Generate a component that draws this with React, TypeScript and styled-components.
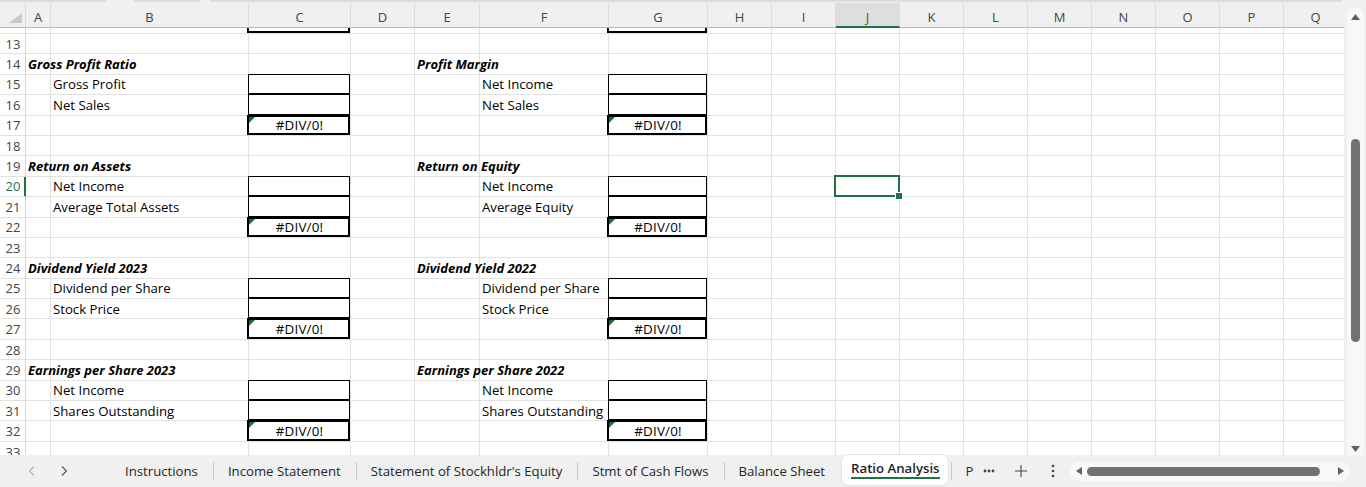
import React from 'react';
import styled, { createGlobalStyle } from 'styled-components';

const GREEN = '#1e7145';
const GRID = '#e1e1e1';

const GlobalStyle = createGlobalStyle`
  *, *::before, *::after { box-sizing: border-box; }
  html, body { margin: 0; padding: 0; }
  body {
    background: #f0f0f0;
    font-family: "Open Sans", "Noto Sans", Arial, sans-serif;
    overflow: hidden;
  }
`;

const COLUMNS: [string, number][] = [
  ['A', 25], ['B', 198], ['C', 102], ['D', 64], ['E', 65], ['F', 129], ['G', 99],
  ['H', 64], ['I', 64], ['J', 64], ['K', 64], ['L', 64], ['M', 64], ['N', 64],
  ['O', 64], ['P', 64], ['Q', 64],
];
const TEMPLATE = `26px ${COLUMNS.map((c) => `${c[1]}px`).join(' ')}`;

type Kind = 'heading' | 'label' | 'input' | 'result';
type Spec = { kind: Kind; text?: string };

const SECTIONS = [
  { row: 14, left: 'Gross Profit Ratio', right: 'Profit Margin', l: ['Gross Profit', 'Net Sales'], r: ['Net Income', 'Net Sales'] },
  { row: 19, left: 'Return on Assets', right: 'Return on Equity', l: ['Net Income', 'Average Total Assets'], r: ['Net Income', 'Average Equity'] },
  { row: 24, left: 'Dividend Yield 2023', right: 'Dividend Yield 2022', l: ['Dividend per Share', 'Stock Price'], r: ['Dividend per Share', 'Stock Price'] },
  { row: 29, left: 'Earnings per Share 2023', right: 'Earnings per Share 2022', l: ['Net Income', 'Shares Outstanding'], r: ['Net Income', 'Shares Outstanding'] },
];

const DATA: Record<string, Spec> = {};
const put = (r: number, c: string, s: Spec) => { DATA[`${r}${c}`] = s; };
put(12, 'C', { kind: 'result', text: '#DIV/0!' });
put(12, 'G', { kind: 'result', text: '#DIV/0!' });
SECTIONS.forEach((s) => {
  put(s.row, 'A', { kind: 'heading', text: s.left });
  put(s.row, 'E', { kind: 'heading', text: s.right });
  [0, 1].forEach((i) => {
    put(s.row + 1 + i, 'B', { kind: 'label', text: s.l[i] });
    put(s.row + 1 + i, 'C', { kind: 'input' });
    put(s.row + 1 + i, 'F', { kind: 'label', text: s.r[i] });
    put(s.row + 1 + i, 'G', { kind: 'input' });
  });
  put(s.row + 3, 'C', { kind: 'result', text: '#DIV/0!' });
  put(s.row + 3, 'G', { kind: 'result', text: '#DIV/0!' });
});

const ROWS = Array.from({ length: 22 }, (_, i) => 12 + i);
const ACTIVE_ROW = 20;
const ACTIVE_COL = 'J';

/* ---------- frame ---------- */
const Frame = styled.div`
  width: 1366px;
  height: 487px;
  display: flex;
  flex-direction: column;
  background: #f0f0f0;
  overflow: hidden;
`;

const TopStrip = styled.div`
  height: 3px;
  display: flex;
  align-items: flex-start;
  flex-shrink: 0;
`;

const Pill = styled.div<{ $w: number; $ml: number }>`
  width: ${(p) => p.$w}px;
  margin-left: ${(p) => p.$ml}px;
  height: 2px;
  background: #dcdcdc;
  border-radius: 0 0 4px 4px;
`;

const Main = styled.div`
  display: flex;
  height: 452px;
  flex-shrink: 0;
`;

const Sheet = styled.div`
  width: 1344px;
  display: flex;
  flex-direction: column;
  overflow: hidden;
`;

/* ---------- column header ---------- */
const ColHeaderRow = styled.div`
  display: grid;
  grid-template-columns: ${TEMPLATE};
  height: 25px;
  flex-shrink: 0;
`;

const Corner = styled.div`
  display: flex;
  justify-content: flex-end;
  align-items: flex-end;
  padding: 0 3px 4px 0;
  border-bottom: 1px solid #b8b8b8;
  border-right: 1px solid #dadada;
`;

const ColHead = styled.div<{ $active?: boolean }>`
  display: flex;
  align-items: center;
  justify-content: center;
  padding-top: 4px;
  font-size: 13px;
  color: ${(p) => (p.$active ? GREEN : '#444')};
  background: ${(p) => (p.$active ? '#dedede' : 'transparent')};
  border-right: 1px solid #dcdcdc;
  border-bottom: ${(p) => (p.$active ? `2px solid ${GREEN}` : '1px solid #b8b8b8')};
`;

/* ---------- grid ---------- */
const Viewport = styled.div`
  flex: 1;
  overflow: hidden;
  background: #fff;
`;

const Grid = styled.div`
  display: grid;
  grid-template-columns: ${TEMPLATE};
  grid-auto-rows: 20.4px;
  margin-top: -14.4px;
`;

const RowHead = styled.div<{ $active?: boolean }>`
  display: flex;
  align-items: center;
  justify-content: center;
  padding-left: 1px;
  font-size: 13px;
  color: ${(p) => (p.$active ? GREEN : '#444')};
  border-bottom: 1px solid ${GRID};
  border-right: 1px solid ${(p) => (p.$active ? GREEN : '#d4d4d4')};
  box-shadow: ${(p) => (p.$active ? `inset -1px 0 0 ${GREEN}` : 'none')};
`;

const Cell = styled.div<{ $center?: boolean }>`
  position: relative;
  display: flex;
  align-items: center;
  justify-content: ${(p) => (p.$center ? 'center' : 'flex-start')};
  padding: 0 2px;
  min-width: 0;
  white-space: nowrap;
  font-size: 13px;
  color: #000;
  border-right: 1px solid ${GRID};
  border-bottom: 1px solid ${GRID};
`;

const HeadingText = styled.span`
  font-weight: 700;
  font-style: italic;
`;

const LabelText = styled.span`
  font-size: 13.2px;
`;

const ResultText = styled.span`
  font-size: 13.4px;
  letter-spacing: 0.2px;
`;

const Box = styled.span<{ $thick?: boolean }>`
  position: absolute;
  pointer-events: none;
  top: -1px;
  left: ${(p) => (p.$thick ? '-2px' : '-1px')};
  right: 0;
  bottom: 0;
  border: ${(p) => (p.$thick ? 2 : 1)}px solid #000;
`;

const ErrorFlag = styled.span`
  position: absolute;
  top: 1px;
  left: 0;
  width: 0;
  height: 0;
  border-top: 6px solid #17702f;
  border-right: 6px solid transparent;
`;

const Selection = styled.span`
  position: absolute;
  top: -2px;
  left: -2px;
  right: -1px;
  bottom: -1px;
  border: 2px solid ${GREEN};
  z-index: 2;
`;

const FillHandle = styled.span`
  position: absolute;
  right: -4px;
  bottom: -4px;
  width: 6px;
  height: 6px;
  background: ${GREEN};
  box-shadow: 0 0 0 1px #fff;
`;

/* ---------- vertical scrollbar ---------- */
const VScroll = styled.div`
  width: 22px;
  padding: 5px 2px 0 3px;
  display: flex;
`;

const VTrack = styled.div`
  flex: 1;
  background: #f8f8f8;
  border-radius: 8px 8px 0 0;
  display: flex;
  flex-direction: column;
  align-items: center;
`;

const VThumb = styled.div`
  margin-top: 119px;
  width: 9px;
  height: 203px;
  border-radius: 5px;
  background: #717171;
`;

const Spacer = styled.div`
  flex: 1;
`;

const ArrowSvg = styled.svg<{ $mt?: number; $mb?: number }>`
  display: block;
  flex-shrink: 0;
  margin-top: ${(p) => p.$mt ?? 0}px;
  margin-bottom: ${(p) => p.$mb ?? 0}px;
`;

/* ---------- tab bar ---------- */
const TabBar = styled.div`
  height: 32px;
  display: flex;
  align-items: center;
  flex-shrink: 0;
`;

const NavGroup = styled.div`
  width: 111px;
  display: flex;
  align-items: center;
  gap: 20px;
  padding-left: 26px;
`;

const Tab = styled.div<{ $pad?: string }>`
  padding: ${(p) => p.$pad ?? '0 15px 0 14px'};
  font-size: 13.2px;
  color: #262626;
  white-space: nowrap;
`;

const TabSep = styled.span`
  width: 1px;
  height: 18px;
  background: #c8c8c8;
  flex-shrink: 0;
`;

const ActiveTab = styled.div`
  align-self: flex-start;
  height: 30px;
  margin: 0 3px 0 2px;
  padding: 4px 8px 0 9px;
  background: #fff;
  border-radius: 6px;
  box-shadow: 0 0 0 1px #e4e4e4, 0 1px 2px rgba(0, 0, 0, 0.08);
`;

const ActiveLabel = styled.span`
  display: block;
  font-size: 13.2px;
  font-weight: 600;
  line-height: 18px;
  color: #1f1f1f;
  white-space: nowrap;
  border-bottom: 2px solid ${GREEN};
`;

const IconSlot = styled.span<{ $ml: number }>`
  display: flex;
  align-items: center;
  margin-left: ${(p) => p.$ml}px;
`;

const HScroll = styled.div`
  margin-left: 15px;
  width: 280px;
  height: 19px;
  border-radius: 9px;
  background: #f8f8f8;
  display: flex;
  align-items: center;
  padding: 0 6px;
`;

const HThumb = styled.div`
  margin-left: 5px;
  width: 233px;
  height: 9px;
  border-radius: 5px;
  background: #717171;
`;

const Chevron = ({ dir, color }: { dir: 'left' | 'right'; color: string }) => (
  <svg width="12" height="12" viewBox="0 0 12 12">
    <path
      d={dir === 'left' ? 'M8 1.5 L3.5 6 L8 10.5' : 'M4 1.5 L8.5 6 L4 10.5'}
      fill="none"
      stroke={color}
      strokeWidth="1.1"
    />
  </svg>
);

const renderCell = (row: number, col: string) => {
  const spec = DATA[`${row}${col}`];
  const selected = row === ACTIVE_ROW && col === ACTIVE_COL;
  return (
    <Cell key={`${row}${col}`} $center={spec?.kind === 'result'}>
      {spec?.kind === 'heading' && <HeadingText>{spec.text}</HeadingText>}
      {spec?.kind === 'label' && <LabelText>{spec.text}</LabelText>}
      {spec?.kind === 'input' && <Box />}
      {spec?.kind === 'result' && (
        <>
          <Box $thick />
          <ErrorFlag />
          <ResultText>{spec.text}</ResultText>
        </>
      )}
      {selected && (
        <Selection>
          <FillHandle />
        </Selection>
      )}
    </Cell>
  );
};

const TABS = ['Instructions', 'Income Statement', "Statement of Stockhldr's Equity", 'Stmt of Cash Flows', 'Balance Sheet'];

export default function App() {
  return (
    <Frame>
      <GlobalStyle />
      <TopStrip>
        <Pill $w={107} $ml={0} />
        <Pill $w={68} $ml={26} />
        <Pill $w={1132} $ml={9} />
      </TopStrip>
      <Main>
        <Sheet>
          <ColHeaderRow>
            <Corner>
              <svg width="13" height="10" viewBox="0 0 13 10">
                <path d="M13 0 L13 10 L0 10 Z" fill="#c9c9c9" />
              </svg>
            </Corner>
            {COLUMNS.map(([name]) => (
              <ColHead key={name} $active={name === ACTIVE_COL}>
                {name}
              </ColHead>
            ))}
          </ColHeaderRow>
          <Viewport>
            <Grid>
              {ROWS.map((row) => (
                <React.Fragment key={row}>
                  <RowHead $active={row === ACTIVE_ROW}>{row}</RowHead>
                  {COLUMNS.map(([name]) => renderCell(row, name))}
                </React.Fragment>
              ))}
            </Grid>
          </Viewport>
        </Sheet>
        <VScroll>
          <VTrack>
            <ArrowSvg width="9" height="6" viewBox="0 0 9 6" $mt={6}>
              <path d="M4.5 0 L9 6 L0 6 Z" fill="#606060" />
            </ArrowSvg>
            <VThumb />
            <Spacer />
            <ArrowSvg width="9" height="6" viewBox="0 0 9 6" $mb={3}>
              <path d="M0 0 L9 0 L4.5 6 Z" fill="#606060" />
            </ArrowSvg>
          </VTrack>
        </VScroll>
      </Main>
      <TabBar>
        <NavGroup>
          <Chevron dir="left" color="#b5b5b5" />
          <Chevron dir="right" color="#555" />
        </NavGroup>
        {TABS.map((t, i) => (
          <React.Fragment key={t}>
            {i > 0 && <TabSep />}
            <Tab>{t}</Tab>
          </React.Fragment>
        ))}
        <ActiveTab>
          <ActiveLabel>Ratio Analysis</ActiveLabel>
        </ActiveTab>
        <TabSep />
        <Tab $pad="0 10px 0 14px">P</Tab>
        <IconSlot $ml={0}>
          <svg width="12" height="4" viewBox="0 0 12 4">
            <circle cx="2" cy="2" r="1.4" fill="#444" />
            <circle cx="6" cy="2" r="1.4" fill="#444" />
            <circle cx="10" cy="2" r="1.4" fill="#444" />
          </svg>
        </IconSlot>
        <IconSlot $ml={20}>
          <svg width="12" height="12" viewBox="0 0 12 12">
            <path d="M6 0 V12 M0 6 H12" stroke="#444" strokeWidth="1.1" />
          </svg>
        </IconSlot>
        <IconSlot $ml={24}>
          <svg width="4" height="14" viewBox="0 0 4 14">
            <circle cx="2" cy="2" r="1.3" fill="#444" />
            <circle cx="2" cy="7" r="1.3" fill="#444" />
            <circle cx="2" cy="12" r="1.3" fill="#444" />
          </svg>
        </IconSlot>
        <HScroll>
          <svg width="6" height="8" viewBox="0 0 6 8">
            <path d="M6 0 L6 8 L0 4 Z" fill="#606060" />
          </svg>
          <HThumb />
          <Spacer />
          <svg width="6" height="8" viewBox="0 0 6 8">
            <path d="M0 0 L6 4 L0 8 Z" fill="#606060" />
          </svg>
        </HScroll>
      </TabBar>
    </Frame>
  );
}
